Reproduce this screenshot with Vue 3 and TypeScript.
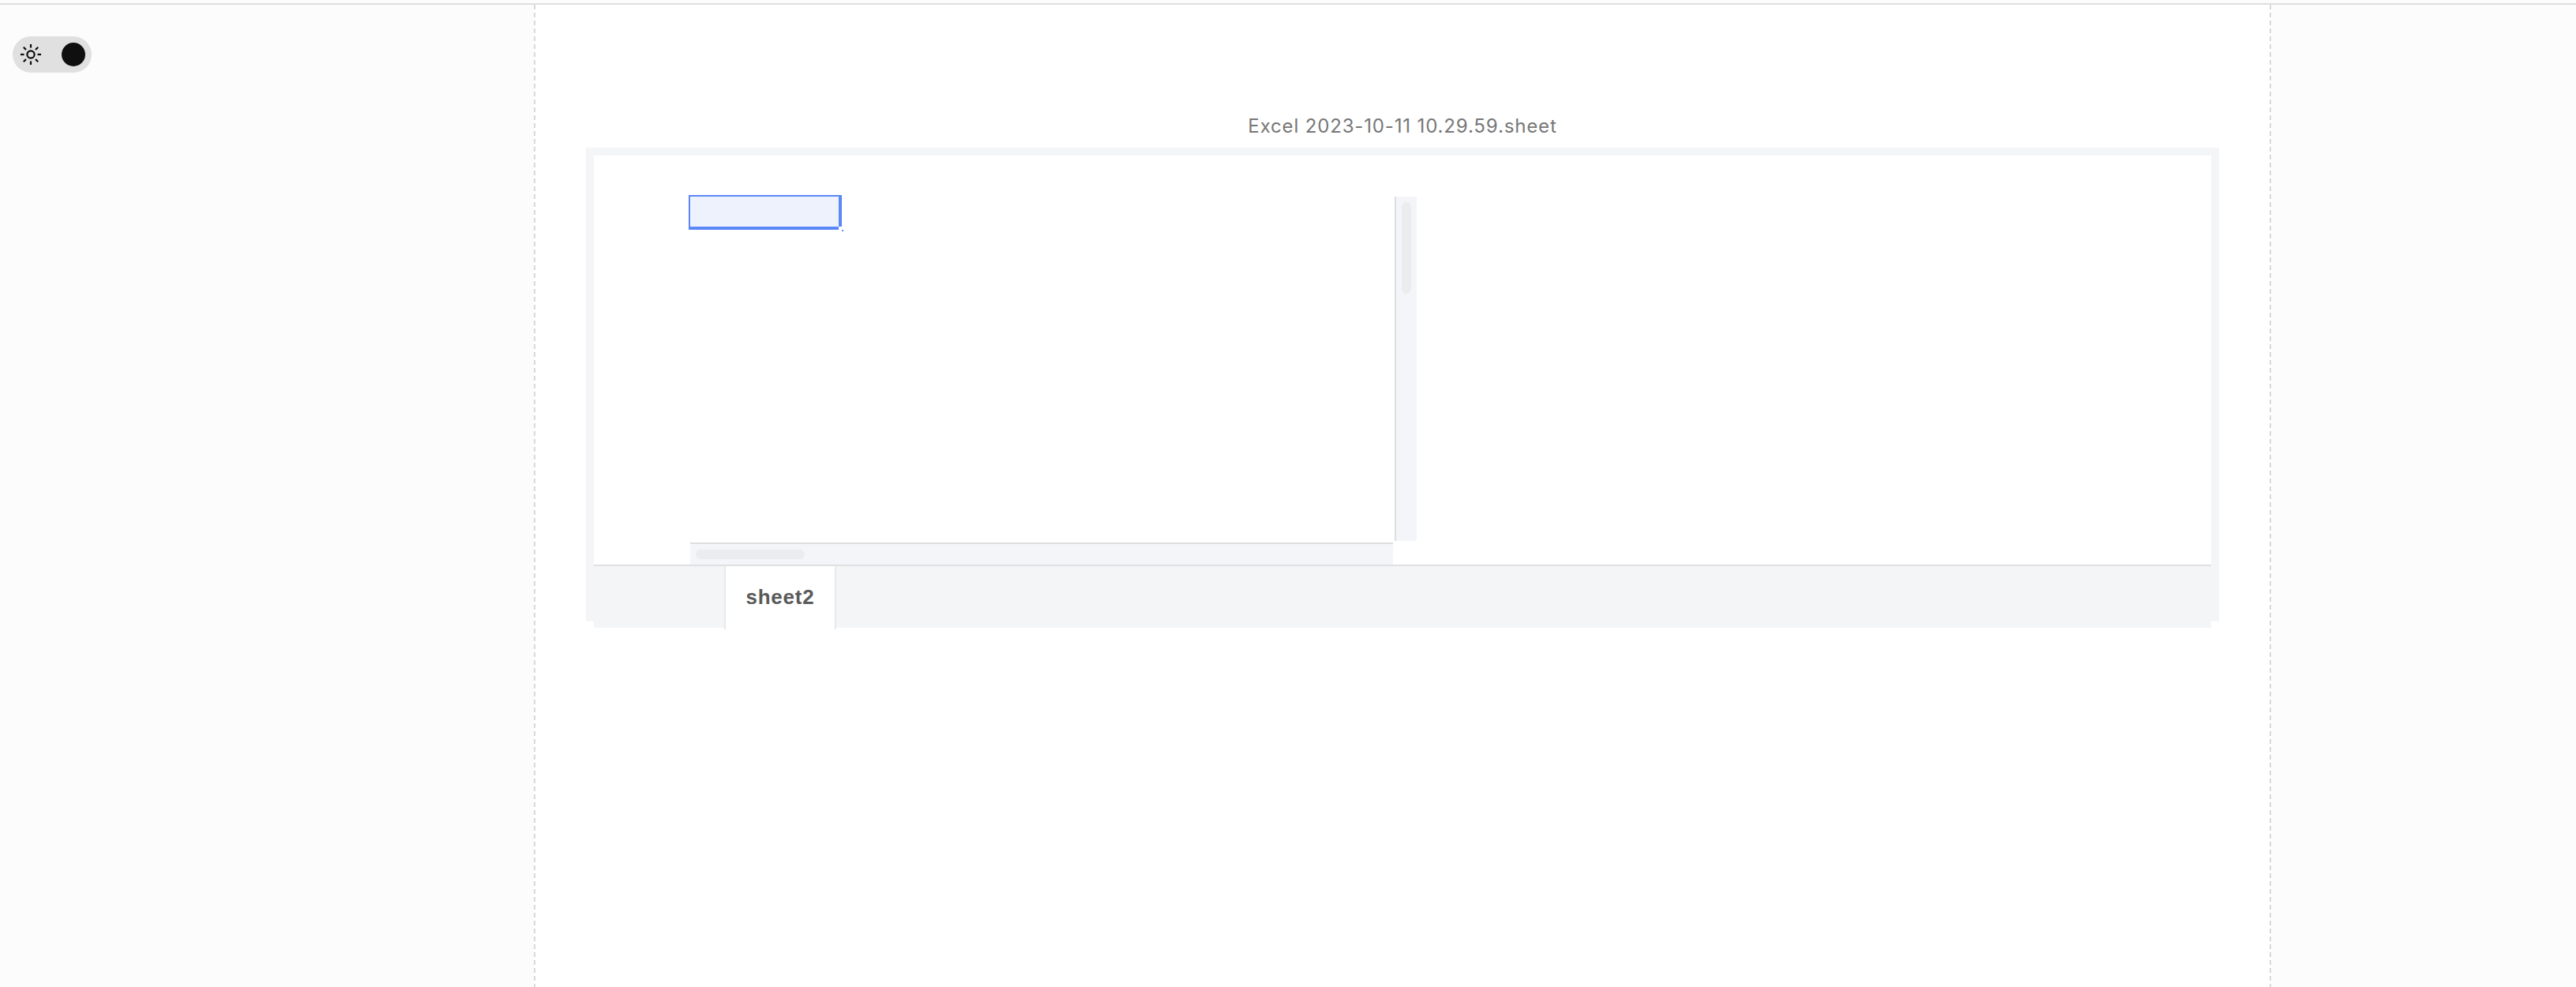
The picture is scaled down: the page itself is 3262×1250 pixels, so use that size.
<script setup lang="ts">
const title = 'Excel 2023-10-11 10.29.59.sheet'
const sheetName = 'sheet2'

// eight rays round the sun, as [x1, y1, x2, y2]
const rays = [0, 45, 90, 135, 180, 225, 270, 315].map((deg) => {
  const rad = (deg * Math.PI) / 180
  return [13 + Math.cos(rad) * 8.5, 13 + Math.sin(rad) * 8.5, 13 + Math.cos(rad) * 13, 13 + Math.sin(rad) * 13]
})
</script>

<template>
  <div class="page">
    <aside class="side">
      <div class="theme-toggle">
        <svg class="sun" width="26" height="26" viewBox="0 0 26 26" fill="none" stroke="#0a0a0a" stroke-width="2.2">
          <circle cx="13" cy="13" r="4.6" />
          <line v-for="(r, i) in rays" :key="i" :x1="r[0]" :y1="r[1]" :x2="r[2]" :y2="r[3]" />
        </svg>
        <span class="knob" />
      </div>
    </aside>
    <div class="divider" />
    <main class="content">
      <div class="file-title">{{ title }}</div>
      <div class="frame">
        <div class="workbook">
          <div class="sheet-area">
            <div class="grid">
              <div class="cells">
                <!-- selected cell -->
                <div class="selection">
                  <span class="notch" />
                  <span class="handle" />
                </div>
              </div>
              <div class="vscroll"><div class="vthumb" /></div>
              <div class="hscroll"><div class="hthumb" /></div>
            </div>
          </div>
          <div class="tabbar">
            <div class="tab">{{ sheetName }}</div>
          </div>
        </div>
      </div>
    </main>
    <div class="divider" />
    <aside class="side" />
  </div>
</template>

<style scoped>
.page {
  display: grid;
  grid-template-columns: 676px 2px 2196px 2px 1fr;
  box-sizing: border-box;
  height: 1246px;
  margin-top: 4px;
  overflow: hidden;
  background: #fff;
  border-top: 2px solid #dedede;
}

.side {
  background: #fcfcfc;
  padding: 40px 16px;
}

.divider {
  background: repeating-linear-gradient(to bottom, #d9d9d9 0 6px, #fff 6px 10px);
}

.theme-toggle {
  display: flex;
  align-items: center;
  justify-content: space-between;
  box-sizing: border-box;
  width: 100px;
  height: 46px;
  padding: 0 8px 0 10px;
  border-radius: 23px;
  background: #e0e0e0;
}

.knob {
  width: 30px;
  height: 30px;
  border-radius: 50%;
  background: #0f0f0f;
}

.content {
  padding: 0 64px;
}

.file-title {
  height: 32px;
  margin-top: 138px;
  margin-bottom: 11px;
  font-family: Inter, sans-serif;
  font-size: 24px;
  line-height: 32px;
  text-align: center;
  letter-spacing: 0.85px;
  color: #777;
}

.frame {
  box-sizing: border-box;
  height: 600px;
  padding: 10px;
  background: #f4f5f7;
}

.workbook {
  display: flex;
  flex-direction: column;
  height: 598px;
  background: #fff;
}

.sheet-area {
  height: 518px;
  box-sizing: border-box;
  padding: 52px 0 0 122px;
}

.grid {
  display: grid;
  grid-template-columns: 890px 28px;
  grid-template-rows: 436px 28px;
  gap: 2px;
  width: 920px;
}

.cells {
  position: relative;
}

.selection {
  position: absolute;
  top: -2px;
  left: -2px;
  box-sizing: border-box;
  width: 194px;
  height: 44px;
  border-style: solid;
  border-color: #5b87f7;
  border-width: 2px 4px 4px 2px;
  background: #eef2fc;
}

.notch {
  position: absolute;
  right: -4px;
  bottom: -4px;
  width: 4px;
  height: 4px;
  background: #fff;
}

.handle {
  position: absolute;
  right: -6px;
  bottom: -6px;
  width: 2px;
  height: 2px;
  background: #5b87f7;
}

.vscroll {
  box-sizing: border-box;
  padding: 7px;
  border-left: 2px solid #dedede;
  background: #f4f5f9;
}

.vthumb {
  width: 12px;
  height: 116px;
  border-radius: 6px;
  background: #ebecee;
}

.hscroll {
  box-sizing: border-box;
  padding: 7px;
  border-top: 2px solid #dedede;
  background: #f4f5f9;
}

.hthumb {
  width: 138px;
  height: 12px;
  border-radius: 6px;
  background: #ebecee;
}

.tabbar {
  display: flex;
  align-items: flex-start;
  height: 80px;
  box-sizing: border-box;
  padding-left: 165px;
  border-top: 2px solid #e0e0e2;
  background: #f4f5f7;
}

.tab {
  box-sizing: border-box;
  width: 142px;
  height: 80px;
  border-left: 2px solid #e8e9eb;
  border-right: 2px solid #e8e9eb;
  background: #fff;
  font-family: "Liberation Sans", Arial, sans-serif;
  font-size: 26px;
  font-weight: 700;
  line-height: 78px;
  letter-spacing: 0.8px;
  text-align: center;
  color: #5a5a5a;
}
</style>

<style>
body {
  margin: 0;
  background: #fcfcfc;
}
</style>
